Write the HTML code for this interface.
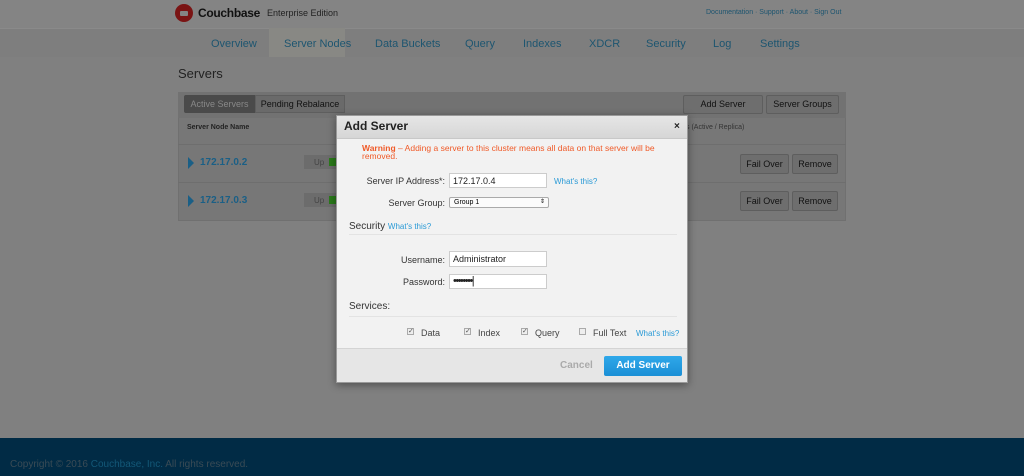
<!DOCTYPE html>
<html><head><style>
*{margin:0;padding:0;box-sizing:border-box}
html,body{background:#808080}
body{width:1024px;height:476px;overflow:hidden;font-family:"Liberation Sans",sans-serif;position:relative}
.a{position:absolute}
.nav span{position:absolute;top:38px;font-size:11px;color:#1d5570}
.btn{position:absolute;background:#6e6e6e;border:1px solid #5e5e5e;border-radius:2px;font-size:9px;color:#111;text-align:center}
.lbl{position:absolute;font-size:9px;color:#333;text-align:right}
.inp{position:absolute;background:#fff;border:1px solid #ccc;font-size:9px;color:#222;padding:3px 4px}
.link{color:#2a9ad6;font-size:8px;position:absolute}
.cb{position:absolute;width:7px;height:7px;border:1px solid #aaa;background:#eee;font-size:7px;line-height:6px;color:#555;text-align:center}
.svc{position:absolute;font-size:9px;color:#444;top:328px}
</style></head><body>
<div class="a" style="left:0;top:0;width:1024px;height:476px;background:#808080"></div>
<div class="a" style="left:0;top:0;width:1024px;height:28px;background:#848484"></div>
<div class="a" style="left:175px;top:4px;width:18px;height:18px;border-radius:50%;background:#7a1414"></div>
<div class="a" style="left:180px;top:11px;width:8px;height:5px;background:#848484;border-radius:1px"></div>
<div class="a" style="left:198px;top:6px;font-size:12px;font-weight:bold;color:#111;letter-spacing:-0.3px">Couchbase</div>
<div class="a" style="left:267px;top:8px;font-size:9px;color:#222">Enterprise Edition</div>
<div class="a" style="left:706px;top:9px;font-size:7px;color:#1d5570">Documentation · Support · About · Sign Out</div>
<div class="a" style="left:0;top:28px;width:1024px;height:29px;background:#7e7e7e;border-top:1px solid #8a8a8a"></div>
<div class="a" style="left:269px;top:28px;width:76px;height:29px;background:#888884"></div>
<div class="nav"><span style="left:211px">Overview</span><span style="left:284px">Server Nodes</span><span style="left:375px">Data Buckets</span><span style="left:465px">Query</span><span style="left:523px">Indexes</span><span style="left:589px">XDCR</span><span style="left:646px">Security</span><span style="left:713px">Log</span><span style="left:760px">Settings</span></div>
<div class="a" style="left:178px;top:66px;font-size:13px;color:#222">Servers</div>
<div class="a" style="left:178px;top:92px;width:668px;height:129px;background:#777;border:1px solid #707070"></div>
<div class="a" style="left:178px;top:92px;width:668px;height:26px;background:#727272"></div>
<div class="a" style="left:184px;top:95px;width:71px;height:18px;background:#4a4a4a;border-radius:2px 0 0 2px;font-size:9px;color:#888;text-align:center;line-height:18px">Active Servers</div>
<div class="a" style="left:255px;top:95px;width:90px;height:18px;background:#6a6a6a;border:1px solid #5e5e5e;font-size:9px;color:#111;text-align:center;line-height:16px">Pending Rebalance</div>
<div class="btn" style="left:683px;top:95px;width:80px;height:19px;line-height:17px">Add Server</div>
<div class="btn" style="left:766px;top:95px;width:73px;height:19px;line-height:17px">Server Groups</div>
<div class="a" style="left:187px;top:124px;font-size:7px;color:#222;font-weight:bold">Server Node Name</div>
<div class="a" style="left:178px;top:144px;width:668px;height:1px;background:#6e6e6e"></div>
<div class="a" style="left:178px;top:182px;width:668px;height:1px;background:#6e6e6e"></div>
<div class="a" style="left:188px;top:157px;width:0;height:0;border-left:6px solid #1a5f86;border-top:6px solid transparent;border-bottom:6px solid transparent"></div>
<div class="a" style="left:200px;top:157px;font-size:10px;font-weight:bold;color:#1a5f86">172.17.0.2</div>
<div class="a" style="left:304px;top:155px;width:34px;height:14px;background:#6c6c6c;font-size:8px;color:#444;padding:3px 10px">Up</div>
<div class="a" style="left:329px;top:158px;width:7px;height:8px;background:#2a7a1a"></div>
<div class="a" style="left:188px;top:195px;width:0;height:0;border-left:6px solid #1a5f86;border-top:6px solid transparent;border-bottom:6px solid transparent"></div>
<div class="a" style="left:200px;top:195px;font-size:10px;font-weight:bold;color:#1a5f86">172.17.0.3</div>
<div class="a" style="left:304px;top:193px;width:34px;height:14px;background:#6c6c6c;font-size:8px;color:#444;padding:3px 10px">Up</div>
<div class="a" style="left:329px;top:196px;width:7px;height:8px;background:#2a7a1a"></div>
<div class="btn" style="left:740px;top:154px;width:49px;height:20px;line-height:18px">Fail Over</div>
<div class="btn" style="left:792px;top:154px;width:46px;height:20px;line-height:18px">Remove</div>
<div class="btn" style="left:740px;top:191px;width:49px;height:20px;line-height:18px">Fail Over</div>
<div class="btn" style="left:792px;top:191px;width:46px;height:20px;line-height:18px">Remove</div>
<div class="a" style="left:686px;top:124px;font-size:7px;color:#333">s (Active / Replica)</div>
<div class="a" style="left:0;top:438px;width:1024px;height:38px;background:#012b45"></div>
<div class="a" style="left:10px;top:459px;font-size:10px;color:#3a4b55">Copyright © 2016 <span style="color:#135878">Couchbase, Inc.</span> All rights reserved.</div>

<div class="a" style="left:336px;top:115px;width:352px;height:268px;background:#f2f2f2;border:1px solid #999;box-shadow:0 2px 8px rgba(0,0,0,.4)"></div>
<div class="a" style="left:337px;top:116px;width:350px;height:23px;background:linear-gradient(#e6e6e6,#d6d6d6);border-bottom:1px solid #c8c8c8"></div>
<div class="a" style="left:344px;top:119px;font-size:12px;font-weight:bold;color:#222">Add Server</div>
<div class="a" style="left:674px;top:121px;font-size:10px;font-weight:bold;color:#222">×</div>
<div class="a" style="left:362px;top:144px;width:310px;font-size:8.5px;line-height:8px;color:#f05a28"><b>Warning</b> – Adding a server to this cluster means all data on that server will be removed.</div>
<div class="lbl" style="left:340px;top:176px;width:105px">Server IP Address*:</div>
<div class="inp" style="left:449px;top:173px;width:98px;height:15px;padding:2px 3px">172.17.0.4</div>
<div class="link" style="left:554px;top:177px">What's this?</div>
<div class="lbl" style="left:340px;top:198px;width:105px">Server Group:</div>
<div class="a" style="left:449px;top:197px;width:100px;height:11px;background:#fbfbfb;border:1px solid #aaa;border-radius:2px;font-size:7px;padding-left:4px;line-height:9px">Group 1<span style="position:absolute;right:3px;font-size:6px">⇕</span></div>
<div class="a" style="left:349px;top:221px;font-size:10px;color:#333">Security <span style="font-size:8px;color:#2a9ad6">What's this?</span></div>
<div class="a" style="left:349px;top:234px;width:328px;height:1px;background:#e3e3e3"></div>
<div class="lbl" style="left:340px;top:255px;width:105px">Username:</div>
<div class="inp" style="left:449px;top:251px;width:98px;height:16px;padding:2px 3px">Administrator</div>
<div class="lbl" style="left:340px;top:277px;width:105px">Password:</div>
<div class="inp" style="left:449px;top:274px;width:98px;height:15px;padding:0 3px;font-size:11px;line-height:12px;letter-spacing:-1.5px">••••••••|</div>
<div class="a" style="left:349px;top:301px;font-size:10px;color:#333">Services:</div>
<div class="a" style="left:349px;top:316px;width:328px;height:1px;background:#e3e3e3"></div>
<div class="cb" style="left:407px;top:328px">✓</div><div class="svc" style="left:421px">Data</div>
<div class="cb" style="left:464px;top:328px">✓</div><div class="svc" style="left:478px">Index</div>
<div class="cb" style="left:521px;top:328px">✓</div><div class="svc" style="left:535px">Query</div>
<div class="cb" style="left:579px;top:328px"></div><div class="svc" style="left:593px">Full Text</div>
<div class="link" style="left:636px;top:329px">What's this?</div>
<div class="a" style="left:337px;top:348px;width:350px;height:34px;background:#e6e6e6;border-top:1px solid #d4d4d4"></div>
<div class="a" style="left:560px;top:360px;font-size:10px;font-weight:bold;color:#aaa">Cancel</div>
<div class="a" style="left:604px;top:356px;width:78px;height:20px;background:linear-gradient(#2fa8ea,#1b8fd6);border-radius:2px;font-size:10px;font-weight:bold;color:#fff;text-align:center;line-height:20px">Add Server</div>
</body></html>
